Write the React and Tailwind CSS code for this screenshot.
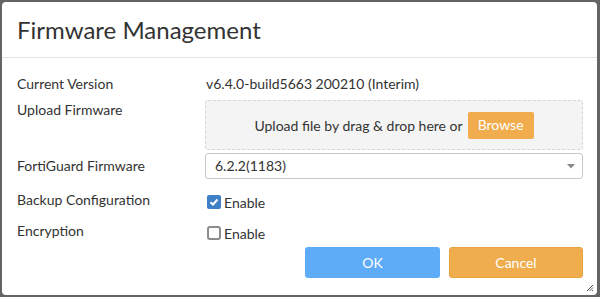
import React from 'react';

const Check = ({ checked }) => (
  checked ? (
    <span className="w-[14px] h-[14px] rounded-[2px] bg-[#3f7fc7] flex items-center justify-center">
      <svg width="10" height="10" viewBox="0 0 10 10">
        <path d="M1.5 5.2 L4 7.5 L8.5 2.5" stroke="#fff" strokeWidth="2" fill="none" />
      </svg>
    </span>
  ) : (
    <span className="w-[14px] h-[14px] rounded-[3px] border-2 border-[#8c8c8c] bg-white" />
  )
);

const Label = ({ children, className = '' }) => (
  <div className={`w-[188px] shrink-0 ${className}`}>{children}</div>
);

export default function App() {
  return (
    <div className="w-[600px] h-[297px] bg-[#646464] pt-[2px] pl-[2px] pr-[3px] pb-[2px]" style={{ fontFamily: 'Lato, "Noto Sans", sans-serif' }}>
      <div className="relative w-full h-full bg-white rounded-[4px] text-[#333] overflow-hidden">
        <div className="h-[56px] border-b border-[#e3e3e3] px-[15px] flex items-center">
          <h1 className="text-[24px] leading-none text-[#333] pt-[1px]">Firmware Management</h1>
        </div>
        <div className="pl-[15px] pr-[14px] text-[14px] leading-[20px]">
          <div className="flex items-center h-[20px] mt-[16px]">
            <Label>Current Version</Label>
            <div className="pl-[1px]">v6.4.0-build5663 200210 (Interim)</div>
          </div>
          <div className="flex mt-[6px]">
            <Label>Upload Firmware</Label>
            <div className="flex-1 h-[50px] border border-dashed border-[#d6d6d6] rounded-[3px] bg-[#f4f4f4] flex items-center justify-center gap-[5px]">
              <span className="pt-[1px]">Upload file by drag &amp; drop here or</span>
              <span className="bg-[#f0ac4d] text-white rounded-[2px] h-[27px] px-[10px] flex items-center">Browse</span>
            </div>
          </div>
          <div className="flex items-center mt-[3px]">
            <Label>FortiGuard Firmware</Label>
            <div className="flex-1 h-[26px] border border-[#c8c8c8] rounded-[3px] flex items-center justify-between pl-[9px] pr-[7px]">
              <span>6.2.2(1183)</span>
              <svg width="8" height="6" viewBox="0 0 8 6"><path d="M0 1 L8 1 L4 5.5 Z" fill="#8a8a8a" /></svg>
            </div>
          </div>
          <div className="flex items-start mt-[11px]">
            <Label>Backup Configuration</Label>
            <div className="flex items-center gap-[3px] pl-[2px] pt-[1px]">
              <Check checked />
              <span className="pt-[2px]">Enable</span>
            </div>
          </div>
          <div className="flex items-start mt-[8px]">
            <Label>Encryption</Label>
            <div className="flex items-center gap-[3px] pl-[2px] pt-[1px]">
              <Check />
              <span className="pt-[2px]">Enable</span>
            </div>
          </div>
          <div className="flex justify-end gap-[9px] mt-[3px] text-[14px]">
            <button className="w-[135px] h-[31px] rounded-[3px] bg-[#5eacf8] text-white">OK</button>
            <button className="w-[134px] h-[31px] rounded-[3px] bg-[#f0ad4e] border border-[#e8a240] text-white">Cancel</button>
          </div>
        </div>
        <svg className="absolute right-[3px] bottom-[3px]" width="8" height="8" viewBox="0 0 8 8">
          <path d="M7 1 L1 7 M7 3.5 L3.5 7 M7 6 L6 7" stroke="#555" strokeWidth="1" />
        </svg>
      </div>
    </div>
  );
}
